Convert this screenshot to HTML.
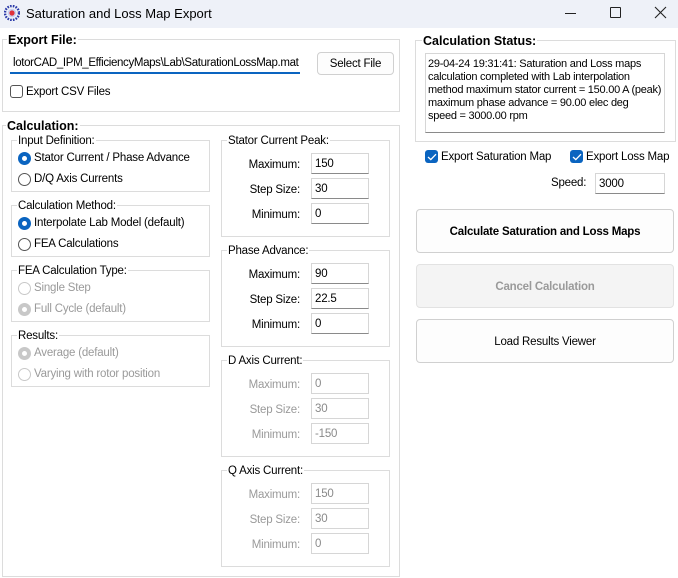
<!DOCTYPE html>
<html><head><meta charset="utf-8">
<style>
*{box-sizing:border-box;margin:0;padding:0}
body{width:678px;height:578px;background:#fff;font-family:"Liberation Sans",sans-serif;font-size:11.5px;letter-spacing:-0.2px;color:#000;position:relative;overflow:hidden}
.a{position:absolute;white-space:nowrap}
.g{position:absolute;border:1px solid #dcdcdc}
.lg{position:absolute;background:#fff;padding:0 1px;line-height:14px;white-space:nowrap}
.b{font-weight:bold;font-size:12.5px;letter-spacing:0}
.in{position:absolute;border:1px solid #d6d6d6;border-bottom:1px solid #8a8a8a;background:#fff;padding:3px 0 0 3px;height:21px;width:58px;line-height:15px}
.dis{color:#9a9a9a}
.in.dis{border-bottom-color:#d6d6d6;color:#8a8a8a}
.r{position:absolute;width:13px;height:13px;border-radius:50%;border:1px solid #555;background:#fff}
.r.on{border:4px solid #0a64c0}
.r.dd{border-color:#c8c8c8}
.r.dd.on{border:4px solid #c8c8c8}
.lab{position:absolute;text-align:right;width:80px;line-height:14px}
.btn{position:absolute;border:1px solid #d0d0d0;border-radius:4px;background:#fdfdfd;text-align:center}
.cb{position:absolute;width:13px;height:13px;border-radius:3px;background:#0a64c0}
</style></head><body>
<div class="a" style="left:0;top:0;width:678px;height:28px;background:#eef1f8"></div>
<svg class="a" style="left:4px;top:5px" width="16" height="16" viewBox="0 0 16 16"><circle cx="8" cy="8" r="7" fill="none" stroke="#2b3aa8" stroke-width="2.4" stroke-dasharray="1.6 1.2"/><circle cx="8" cy="8" r="4.3" fill="#c9cff0"/><circle cx="8" cy="8" r="2.6" fill="#e0303a"/></svg>
<div class="a" style="left:26px;top:6px;font-size:13px;letter-spacing:0">Saturation and Loss Map Export</div>
<div class="a" style="left:565px;top:13px;width:11px;height:1px;background:#222"></div>
<div class="a" style="left:610px;top:7px;width:11px;height:11px;border:1px solid #222;border-radius:1px"></div>
<svg class="a" style="left:654px;top:6px" width="13" height="13"><path d="M1 1L12 12M12 1L1 12" stroke="#222" stroke-width="1.1"/></svg>

<div class="g" style="left:2px;top:39px;width:398px;height:73px"></div>
<div class="lg b" style="left:7px;top:33px">Export File:</div>
<div class="a" style="left:10px;top:52px;width:290px;height:22px;background:#fff;border-bottom:2px solid #0a64c0;padding:5px 0 0 3px;overflow:hidden;font-size:11.5px;letter-spacing:-0.35px">lotorCAD_IPM_EfficiencyMaps\Lab\SaturationLossMap.mat</div>
<div class="btn" style="left:317px;top:52px;width:77px;height:23px;line-height:23px">Select File</div>
<div class="a" style="left:10px;top:85px;width:13px;height:13px;border:1px solid #555;border-radius:3px"></div>
<div class="a" style="left:26px;top:86px">Export CSV Files</div>

<div class="g" style="left:2px;top:125px;width:398px;height:452px"></div>
<div class="lg b" style="left:6px;top:119px">Calculation:</div>

<div class="g" style="left:11px;top:140px;width:199px;height:52px"></div>
<div class="lg" style="left:17px;top:134px">Input Definition:</div>
<div class="r on" style="left:18px;top:152px"></div><div class="a" style="left:34px;top:152px">Stator Current / Phase Advance</div>
<div class="r" style="left:18px;top:173px"></div><div class="a" style="left:34px;top:173px">D/Q Axis Currents</div>

<div class="g" style="left:11px;top:205px;width:199px;height:52px"></div>
<div class="lg" style="left:17px;top:199px">Calculation Method:</div>
<div class="r on" style="left:18px;top:217px"></div><div class="a" style="left:34px;top:217px">Interpolate Lab Model (default)</div>
<div class="r" style="left:18px;top:238px"></div><div class="a" style="left:34px;top:238px">FEA Calculations</div>

<div class="g" style="left:11px;top:270px;width:199px;height:52px"></div>
<div class="lg" style="left:17px;top:264px">FEA Calculation Type:</div>
<div class="r dd" style="left:18px;top:282px"></div><div class="a dis" style="left:34px;top:282px">Single Step</div>
<div class="r dd on" style="left:18px;top:303px"></div><div class="a dis" style="left:34px;top:303px">Full Cycle (default)</div>

<div class="g" style="left:11px;top:335px;width:199px;height:52px"></div>
<div class="lg" style="left:17px;top:329px">Results:</div>
<div class="r dd on" style="left:18px;top:347px"></div><div class="a dis" style="left:34px;top:347px">Average (default)</div>
<div class="r dd" style="left:18px;top:368px"></div><div class="a dis" style="left:34px;top:368px">Varying with rotor position</div>

<div class="g" style="left:221px;top:140px;width:169px;height:97px"></div>
<div class="lg" style="left:227px;top:134px">Stator Current Peak:</div>
<div class="lab" style="left:220px;top:158px">Maximum:</div><div class="in" style="left:311px;top:153px">150</div>
<div class="lab" style="left:220px;top:183px">Step Size:</div><div class="in" style="left:311px;top:178px">30</div>
<div class="lab" style="left:220px;top:208px">Minimum:</div><div class="in" style="left:311px;top:203px">0</div>

<div class="g" style="left:221px;top:250px;width:169px;height:97px"></div>
<div class="lg" style="left:227px;top:244px">Phase Advance:</div>
<div class="lab" style="left:220px;top:268px">Maximum:</div><div class="in" style="left:311px;top:263px">90</div>
<div class="lab" style="left:220px;top:293px">Step Size:</div><div class="in" style="left:311px;top:288px">22.5</div>
<div class="lab" style="left:220px;top:318px">Minimum:</div><div class="in" style="left:311px;top:313px">0</div>

<div class="g" style="left:221px;top:360px;width:169px;height:97px"></div>
<div class="lg" style="left:227px;top:354px">D Axis Current:</div>
<div class="lab dis" style="left:220px;top:378px">Maximum:</div><div class="in dis" style="left:311px;top:373px">0</div>
<div class="lab dis" style="left:220px;top:403px">Step Size:</div><div class="in dis" style="left:311px;top:398px">30</div>
<div class="lab dis" style="left:220px;top:428px">Minimum:</div><div class="in dis" style="left:311px;top:423px">-150</div>

<div class="g" style="left:221px;top:470px;width:169px;height:97px"></div>
<div class="lg" style="left:227px;top:464px">Q Axis Current:</div>
<div class="lab dis" style="left:220px;top:488px">Maximum:</div><div class="in dis" style="left:311px;top:483px">150</div>
<div class="lab dis" style="left:220px;top:513px">Step Size:</div><div class="in dis" style="left:311px;top:508px">30</div>
<div class="lab dis" style="left:220px;top:538px">Minimum:</div><div class="in dis" style="left:311px;top:533px">0</div>

<div class="g" style="left:415px;top:40px;width:261px;height:102px"></div>
<div class="lg b" style="left:422px;top:34px">Calculation Status:</div>
<div class="a" style="left:425px;top:53px;width:240px;height:80px;border:1px solid #d6d6d6;border-bottom:1px solid #8a8a8a;padding:4px 0 0 2px;line-height:13px;font-size:11px;letter-spacing:-0.25px">29-04-24 19:31:41: Saturation and Loss maps<br>calculation completed with Lab interpolation<br>method maximum stator current = 150.00 A (peak)<br>maximum phase advance = 90.00 elec deg<br>speed = 3000.00 rpm</div>

<div class="cb" style="left:425px;top:150px"></div>
<svg class="a" style="left:427px;top:153px" width="10" height="8"><path d="M1 4L3.8 6.6L9 1.2" fill="none" stroke="#fff" stroke-width="1.3"/></svg>
<div class="a" style="left:441px;top:151px">Export Saturation Map</div>
<div class="cb" style="left:570px;top:150px"></div>
<svg class="a" style="left:572px;top:153px" width="10" height="8"><path d="M1 4L3.8 6.6L9 1.2" fill="none" stroke="#fff" stroke-width="1.3"/></svg>
<div class="a" style="left:586px;top:151px">Export Loss Map</div>
<div class="a" style="left:551px;top:177px">Speed:</div>
<div class="in" style="left:595px;top:173px;width:70px">3000</div>

<div class="btn" style="left:416px;top:209px;width:258px;height:44px;line-height:44px;font-weight:bold">Calculate Saturation and Loss Maps</div>
<div class="btn" style="left:416px;top:264px;width:258px;height:44px;line-height:44px;font-weight:bold;color:#9a9a9a;background:#f4f4f4;border-color:#e2e2e2">Cancel Calculation</div>
<div class="btn" style="left:416px;top:319px;width:258px;height:44px;line-height:44px">Load Results Viewer</div>
</body></html>
